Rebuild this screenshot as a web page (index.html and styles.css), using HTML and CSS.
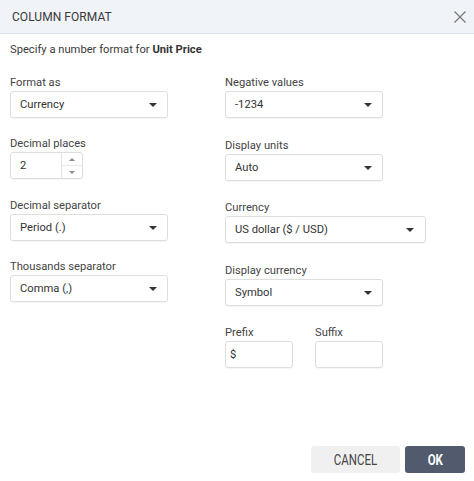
FILE: index.html
```html
<!DOCTYPE html>
<html>
<head>
<meta charset="utf-8">
<link rel="stylesheet" href="styles.css">
</head>
<body>
<div class="dialog">
  <div class="header">
    <span class="title">COLUMN FORMAT</span>
    <svg class="close" width="14" height="14" viewBox="0 0 14 14"><path d="M1.5 1.5 L12.5 12.5 M12.5 1.5 L1.5 12.5" stroke="#7a7a7a" stroke-width="1.3" fill="none"/></svg>
  </div>
  <div class="body">
    <p class="intro">Specify a number format for <b>Unit Price</b></p>
    <div class="columns">
      <div class="col col-left">
        <div class="field">
          <span class="label">Format as</span>
          <div class="select w-std"><span>Currency</span><i class="caret"></i></div>
        </div>
        <div class="field">
          <span class="label">Decimal places</span>
          <div class="spin">
            <span class="spin-val">2</span>
            <div class="spin-btns">
              <div class="spin-btn"><i class="tri-up"></i></div>
              <div class="spin-btn"><i class="tri-down"></i></div>
            </div>
          </div>
        </div>
        <div class="field">
          <span class="label">Decimal separator</span>
          <div class="select w-std"><span>Period (.)</span><i class="caret"></i></div>
        </div>
        <div class="field">
          <span class="label">Thousands separator</span>
          <div class="select w-std"><span>Comma (,)</span><i class="caret"></i></div>
        </div>
      </div>
      <div class="col col-right">
        <div class="field">
          <span class="label">Negative values</span>
          <div class="select w-std"><span>-1234</span><i class="caret"></i></div>
        </div>
        <div class="field">
          <span class="label">Display units</span>
          <div class="select w-std"><span>Auto</span><i class="caret"></i></div>
        </div>
        <div class="field">
          <span class="label">Currency</span>
          <div class="select w-wide"><span>US dollar ($ / USD)</span><i class="caret"></i></div>
        </div>
        <div class="field">
          <span class="label">Display currency</span>
          <div class="select w-std"><span>Symbol</span><i class="caret"></i></div>
        </div>
        <div class="affix-row">
          <div class="field">
            <span class="label">Prefix</span>
            <div class="input">$</div>
          </div>
          <div class="field">
            <span class="label">Suffix</span>
            <div class="input"></div>
          </div>
        </div>
      </div>
    </div>
  </div>
  <div class="footer">
    <button class="btn btn-cancel"><span>CANCEL</span></button>
    <button class="btn btn-ok"><span>OK</span></button>
  </div>
</div>
</body>
</html>
```
FILE: styles.css
```css
html, body {
  margin: 0;
  padding: 0;
  background: #fff;
}
body {
  font-family: Roboto, "Liberation Sans", sans-serif;
  color: #333;
}
.dialog {
  width: 474px;
  height: 481px;
  display: flex;
  flex-direction: column;
  box-sizing: border-box;
  background: #fff;
}
.header {
  height: 33px;
  flex: none;
  background: #f0f3f7;
  border-bottom: 1px solid #dce1e7;
  display: flex;
  align-items: center;
  justify-content: space-between;
  padding: 0 7px 0 12px;
}
.title {
  font-size: 12px;
  color: #3a3a3a;
  letter-spacing: 0.05px;
}
.close {
  display: block;
}
.body {
  padding: 8px 9px 0 10px;
  flex: 1;
}
.intro {
  margin: 0;
  font-size: 11.2px;
  line-height: 16px;
  color: #3a3a3a;
}
.intro b {
  font-weight: 700;
  color: #333;
}
.columns {
  display: flex;
  margin-top: 17px;
}
.col {
  display: flex;
  flex-direction: column;
}
.col-left {
  width: 215px;
  gap: 18.3px;
}
.col-right {
  gap: 19.5px;
}
.field {
  display: flex;
  flex-direction: column;
  align-items: flex-start;
}
.label {
  font-size: 11.2px;
  line-height: 16px;
  color: #444;
}
.select {
  height: 27px;
  box-sizing: border-box;
  border: 1px solid #dedede;
  border-radius: 3px;
  box-shadow: 0 1px 1px rgba(0, 0, 0, 0.04);
  display: flex;
  align-items: center;
  justify-content: space-between;
  padding: 0 10px 0 9px;
  font-size: 11.2px;
  color: #333;
  background: #fff;
}
.w-std {
  width: 158px;
}
.w-wide {
  width: 201px;
  padding-right: 11px;
}
.caret {
  width: 0;
  height: 0;
  border-left: 4px solid transparent;
  border-right: 4px solid transparent;
  border-top: 4px solid #333;
  margin-top: 1px;
}
.spin {
  width: 73px;
  height: 27px;
  box-sizing: border-box;
  border: 1px solid #dedede;
  border-radius: 3px;
  box-shadow: 0 1px 1px rgba(0, 0, 0, 0.04);
  display: flex;
}
.spin-val {
  flex: 1;
  display: flex;
  align-items: center;
  padding-left: 9px;
  font-size: 11.2px;
  color: #333;
}
.spin-btns {
  width: 20px;
  border-left: 1px solid #e2e2e2;
  display: flex;
  flex-direction: column;
}
.spin-btn {
  flex: 1;
  display: flex;
  align-items: center;
  justify-content: center;
}
.spin-btn + .spin-btn {
  border-top: 1px solid #ececec;
}
.tri-up {
  width: 0;
  height: 0;
  border-left: 3.5px solid transparent;
  border-right: 3.5px solid transparent;
  border-bottom: 3px solid #8a8a8a;
}
.tri-down {
  width: 0;
  height: 0;
  border-left: 3.5px solid transparent;
  border-right: 3.5px solid transparent;
  border-top: 3px solid #8a8a8a;
}
.affix-row {
  display: flex;
  gap: 22px;
}
.input {
  width: 68px;
  height: 27px;
  box-sizing: border-box;
  border: 1px solid #dedede;
  border-radius: 3px;
  box-shadow: 0 1px 1px rgba(0, 0, 0, 0.04);
  display: flex;
  align-items: center;
  padding-left: 4px;
  font-size: 11.2px;
  color: #333;
}
.footer {
  flex: none;
  display: flex;
  justify-content: flex-end;
  gap: 5px;
  padding: 0 9px 8px 0;
}
.btn {
  height: 27px;
  border: none;
  border-radius: 3px;
  font-family: Roboto, "Liberation Sans", sans-serif;
  font-size: 14px;
  padding: 0;
  display: flex;
  align-items: center;
  justify-content: center;
}
.btn span {
  display: inline-block;
  transform: scaleX(0.82);
}
.btn-cancel {
  width: 89px;
  background: #f0f0f0;
  color: #444;
}
.btn-ok {
  width: 60px;
  background: #525a6e;
  color: #fff;
  font-weight: 700;
}
```
